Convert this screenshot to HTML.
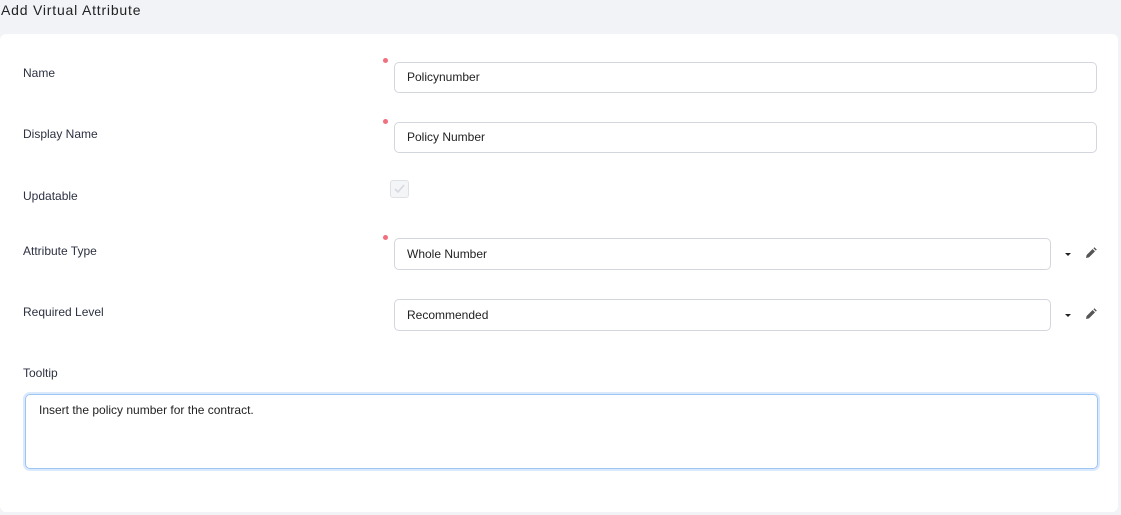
<!DOCTYPE html>
<html><head><style>
*{box-sizing:border-box;margin:0;padding:0}
body{width:1121px;height:515px;background:#f2f3f7;font-family:"Liberation Sans",sans-serif;position:relative;overflow:hidden;color:#2d3142}
.title{position:absolute;left:1px;top:2px;font-size:14px;letter-spacing:0.8px;color:#222}
.card{position:absolute;left:0;top:34px;width:1118px;height:478px;background:#fff;border-radius:6px}
.lbl{position:absolute;left:23px;font-size:12px;color:#2d3142}
.inp{position:absolute;left:394px;height:31px;border:1px solid #d4d6de;border-radius:5px;font-size:12px;padding:0 0 0 12px;line-height:29px;color:#222}
.dot{position:absolute;left:383px;width:5px;height:5px;border-radius:50%;background:#f0707e}
.caret{position:absolute;left:1065px;width:0;height:0;border-left:3.5px solid transparent;border-right:3.5px solid transparent;border-top:3.5px solid #222}
.pen{position:absolute;left:1085px}
</style></head><body>
<div class="title">Add Virtual Attribute</div>
<div class="card"></div>
<div class="lbl" style="top:66px">Name</div>
<div class="dot" style="top:58px"></div>
<div class="inp" style="top:62px;width:703px">Policynumber</div>
<div class="lbl" style="top:127px">Display Name</div>
<div class="dot" style="top:119px"></div>
<div class="inp" style="top:122px;width:703px">Policy Number</div>
<div class="lbl" style="top:189px">Updatable</div>
<div style="position:absolute;left:390px;top:180px;width:19px;height:18px;border:1px solid #dfe1e6;border-radius:3px;background:#f4f5f7"><svg width="17" height="16" viewBox="0 0 17 16"><path d="M4 8l3 3 6-7" stroke="#d5d8de" stroke-width="1.6" fill="none"/></svg></div>
<div class="lbl" style="top:244px">Attribute Type</div>
<div class="dot" style="top:235px"></div>
<div class="inp" style="top:238px;width:657px;height:32px;line-height:30px">Whole Number</div>
<div class="caret" style="top:253px"></div>
<svg class="pen" style="top:247px" width="12" height="12" viewBox="0 0 12 12"><path d="M1 11l0.6-3 6-6 2.4 2.4-6 6z M8.4 1.2l1-1 2.4 2.4-1 1z" fill="#555"/></svg>
<div class="lbl" style="top:305px">Required Level</div>
<div class="inp" style="top:299px;width:657px;height:32px;line-height:30px">Recommended</div>
<div class="caret" style="top:314px"></div>
<svg class="pen" style="top:308px" width="12" height="12" viewBox="0 0 12 12"><path d="M1 11l0.6-3 6-6 2.4 2.4-6 6z M8.4 1.2l1-1 2.4 2.4-1 1z" fill="#555"/></svg>
<div class="lbl" style="top:366px">Tooltip</div>
<div style="position:absolute;left:25px;top:394px;width:1073px;height:75px;border:1px solid #9cc4f5;box-shadow:0 0 0 2px #dbe9fc;border-radius:5px;font-size:12px;padding:8px 13px;color:#222">Insert the policy number for the contract.</div>
</body></html>
